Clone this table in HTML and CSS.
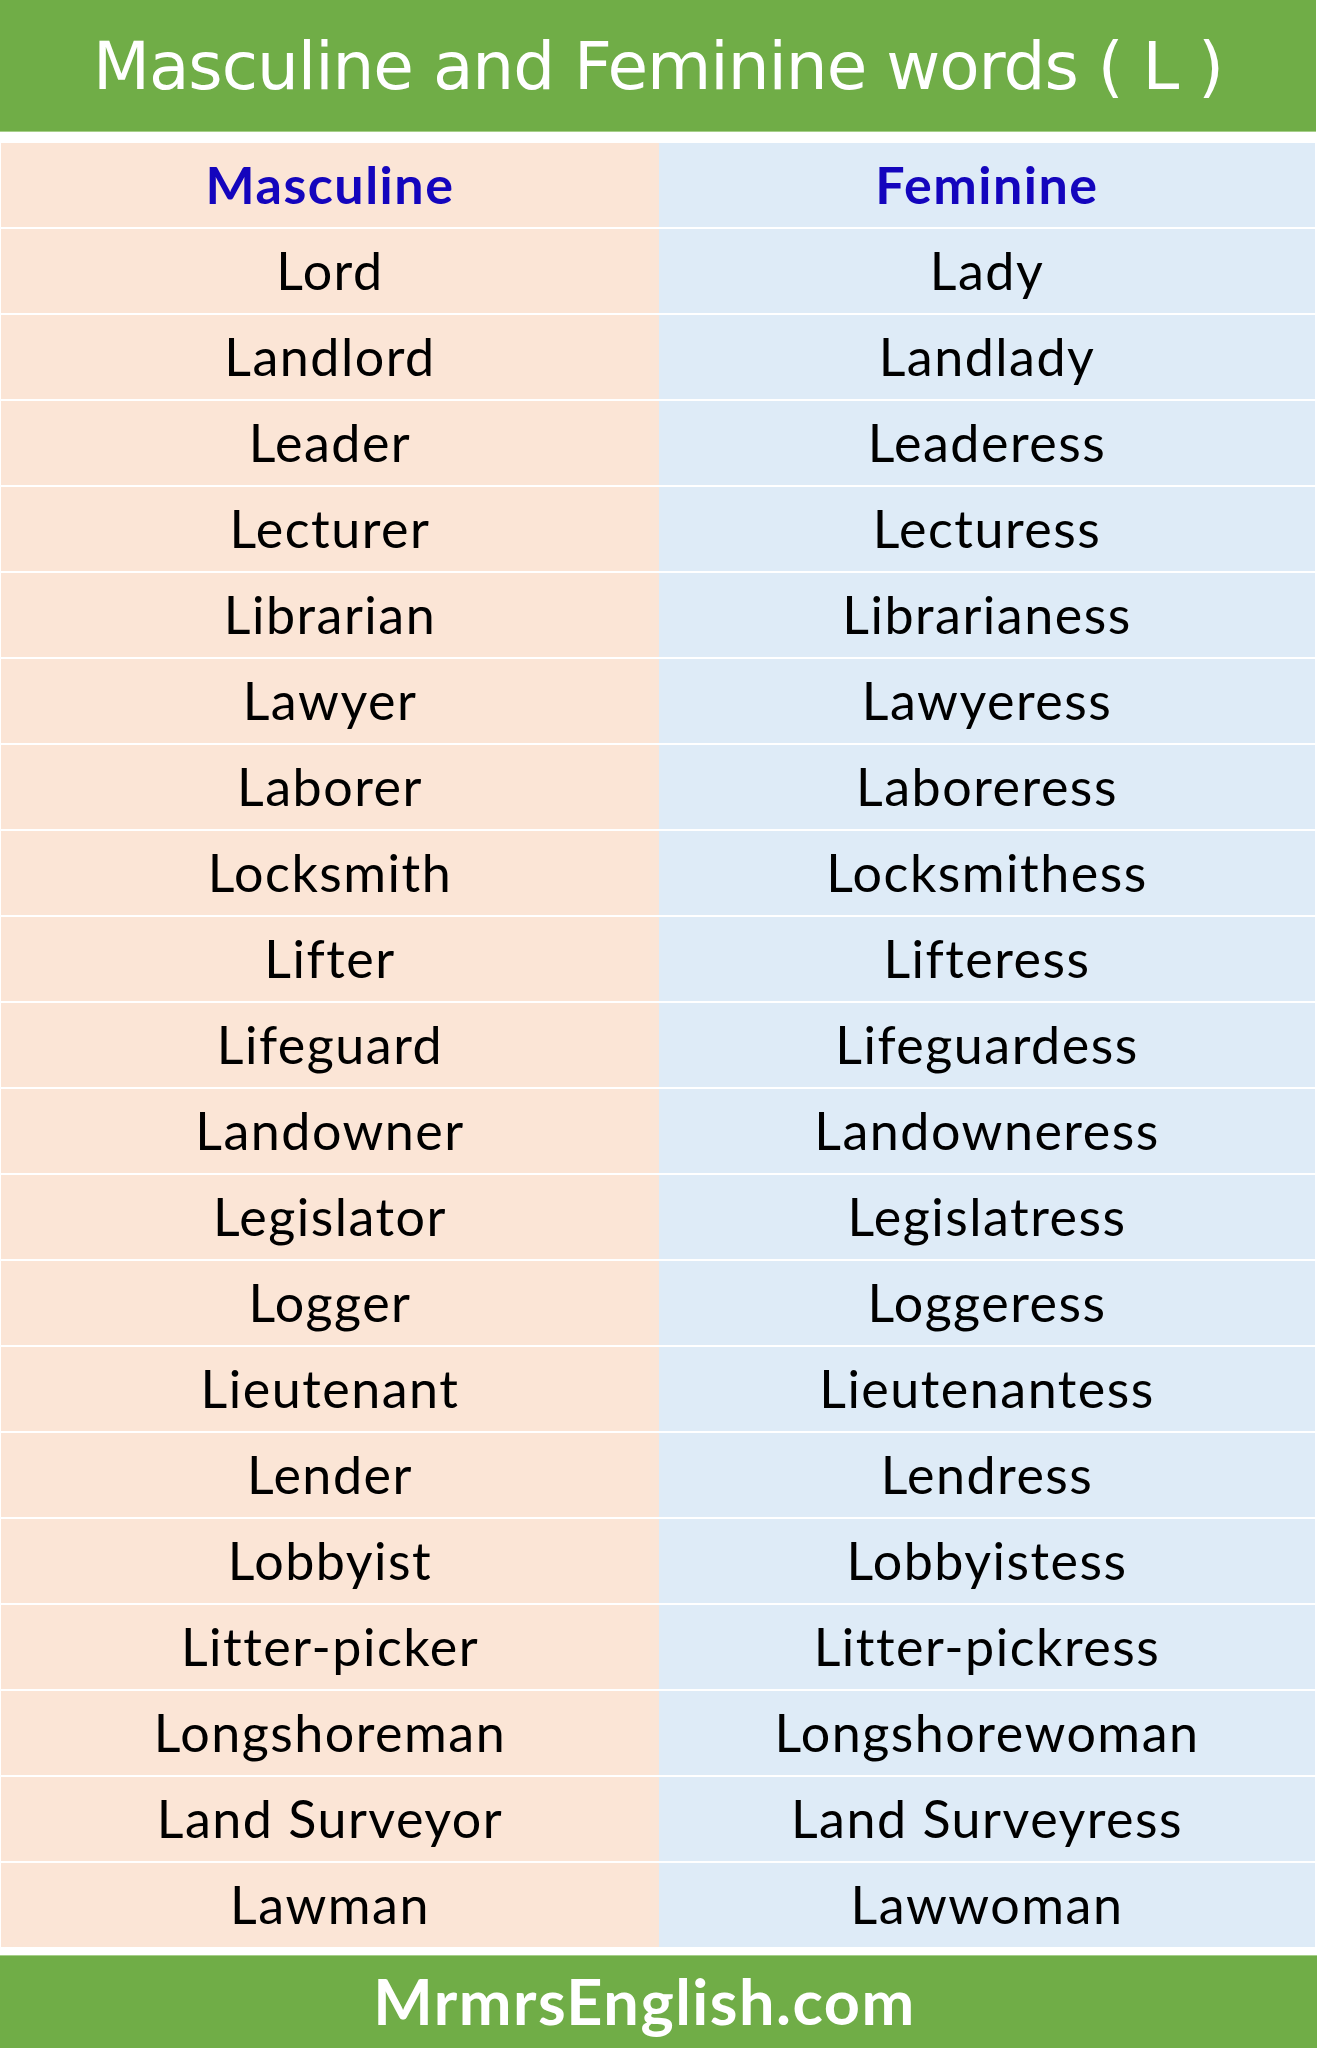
FILE: index.html
```html
<!DOCTYPE html>
<html lang="en">
<head>
<meta charset="utf-8">
<title>Masculine and Feminine words ( L )</title>
<link rel="stylesheet" href="styles.css">
</head>
<body>
<header class="banner"><h1 class="title">Masculine and Feminine words ( L )</h1></header>
<main class="table">
  <div class="cell m head">Masculine</div><div class="cell f head">Feminine</div>
  <div class="cell m">Lord</div><div class="cell f">Lady</div>
  <div class="cell m">Landlord</div><div class="cell f">Landlady</div>
  <div class="cell m">Leader</div><div class="cell f">Leaderess</div>
  <div class="cell m">Lecturer</div><div class="cell f">Lecturess</div>
  <div class="cell m">Librarian</div><div class="cell f">Librarianess</div>
  <div class="cell m">Lawyer</div><div class="cell f">Lawyeress</div>
  <div class="cell m">Laborer</div><div class="cell f">Laboreress</div>
  <div class="cell m">Locksmith</div><div class="cell f">Locksmithess</div>
  <div class="cell m">Lifter</div><div class="cell f">Lifteress</div>
  <div class="cell m">Lifeguard</div><div class="cell f">Lifeguardess</div>
  <div class="cell m">Landowner</div><div class="cell f">Landowneress</div>
  <div class="cell m">Legislator</div><div class="cell f">Legislatress</div>
  <div class="cell m">Logger</div><div class="cell f">Loggeress</div>
  <div class="cell m">Lieutenant</div><div class="cell f">Lieutenantess</div>
  <div class="cell m">Lender</div><div class="cell f">Lendress</div>
  <div class="cell m">Lobbyist</div><div class="cell f">Lobbyistess</div>
  <div class="cell m">Litter-picker</div><div class="cell f">Litter-pickress</div>
  <div class="cell m">Longshoreman</div><div class="cell f">Longshorewoman</div>
  <div class="cell m">Land Surveyor</div><div class="cell f">Land Surveyress</div>
  <div class="cell m">Lawman</div><div class="cell f">Lawwoman</div>
</main>
<footer class="footer">MrmrsEnglish.com</footer>
</body>
</html>
```
FILE: styles.css
```css
html, body {
  margin: 0;
  padding: 0;
  background: #ffffff;
}
body {
  width: 1317px;
  height: 2048px;
  overflow: hidden;
  font-family: Lato, "Liberation Sans", sans-serif;
}
.banner {
  height: 132px;
  background: #70ad47;
  border-bottom: 1px solid #a6cf8a;
  box-sizing: border-box;
  display: flex;
  align-items: center;
  justify-content: center;
  margin-right: 1px;
}
.title {
  margin: 0;
  color: #ffffff;
  font-family: "DejaVu Sans", sans-serif;
  font-weight: normal;
  font-size: 66px;
  letter-spacing: -1px;
  line-height: 1;
  padding-top: 2px;
}
.table {
  margin-top: 11px;
  padding: 0 1px;
  display: grid;
  grid-template-columns: 658px 656px;
  grid-auto-rows: 84px;
  row-gap: 2px;
}
.cell {
  display: flex;
  align-items: center;
  justify-content: center;
  font-size: 52px;
  letter-spacing: 1.5px;
  color: #000000;
  line-height: 1;
  padding-bottom: 3px;
  box-sizing: border-box;
}
.m { background: #fbe5d6; }
.f { background: #deebf7; }
.head {
  font-weight: bold;
  color: #1405bd;
}
.footer {
  margin-top: 8px;
  height: 93px;
  background: #70ad47;
  border-top: 1px solid #a6cf8a;
  box-sizing: border-box;
  display: flex;
  align-items: center;
  justify-content: center;
  color: #ffffff;
  font-weight: bold;
  font-size: 63px;
  letter-spacing: 1.5px;
  line-height: 1;
  padding-bottom: 4px;
  padding-right: 28px;
}
```
